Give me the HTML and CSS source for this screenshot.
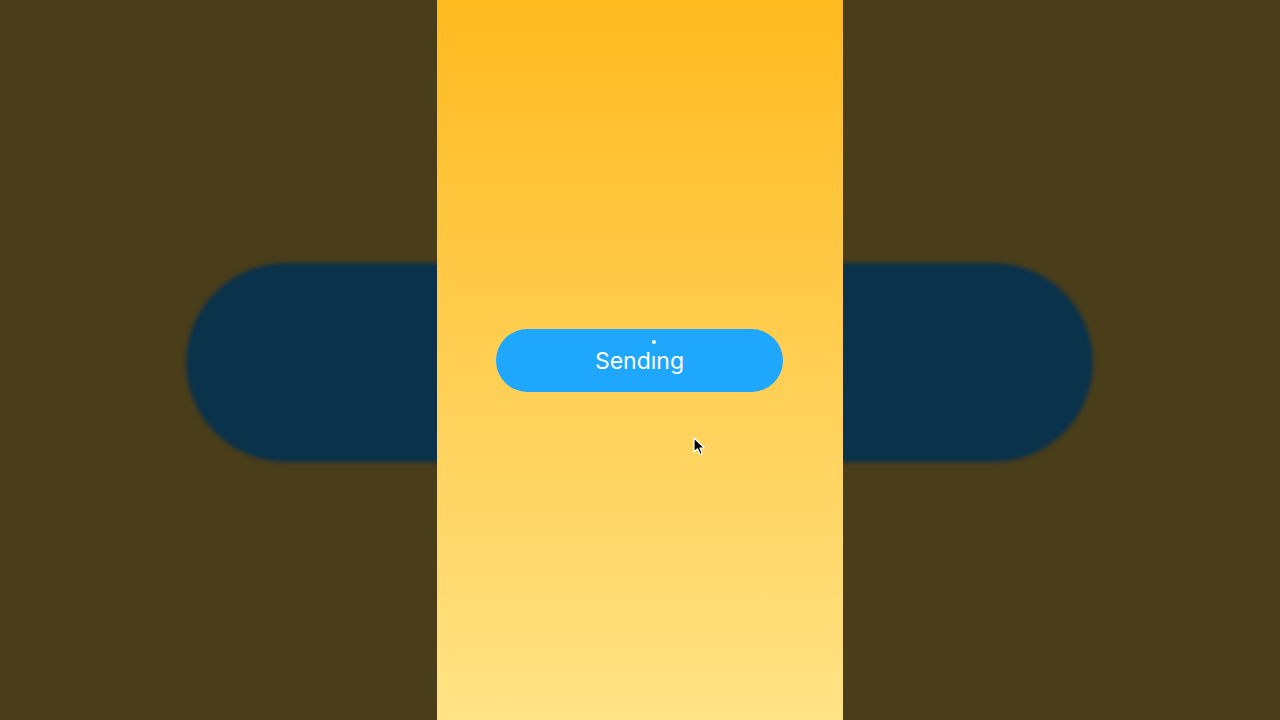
FILE: index.html
```html
<!DOCTYPE html>
<html>
<head>
<meta charset="utf-8">
<link rel="stylesheet" href="styles.css">
</head>
<body>
<div class="stage">
  <div class="backdrop-pill"></div>
  <div class="phone">
    <button class="send-btn"><span class="label">Send<span class="i-wrap">ı<span class="i-dot"></span></span>ng</span></button>
  </div>
  <svg class="cursor" width="14" height="20" viewBox="0 0 14 20">
    <path d="M1 1 L1 15 L4.5 11.8 L7 17.5 L9.3 16.5 L6.9 11 L11.5 11 Z" fill="#000" stroke="#fff" stroke-width="1.2" stroke-linejoin="round"/>
  </svg>
</div>
</body>
</html>
```

FILE: styles.css
```css
html, body {
  margin: 0;
  padding: 0;
}
body {
  width: 1280px;
  height: 720px;
  overflow: hidden;
  background: #4a3d1a;
  font-family: Inter, "Noto Sans", sans-serif;
}
.stage {
  position: relative;
  width: 1280px;
  height: 720px;
  display: flex;
  justify-content: center;
}
.backdrop-pill {
  position: absolute;
  left: 186px;
  top: 263px;
  width: 907px;
  height: 199px;
  border-radius: 100px;
  background: #0a324a;
  filter: blur(2px);
}
.phone {
  position: relative;
  width: 406px;
  height: 720px;
  background: linear-gradient(180deg, #ffba1f 0%, #ffc63e 30%, #ffd25c 60%, #ffe385 100%);
  display: flex;
  flex-direction: column;
  align-items: center;
  padding-top: 329px;
  box-sizing: border-box;
}
.send-btn {
  width: 287px;
  height: 63px;
  margin-left: -1px;
  border: none;
  border-radius: 32px;
  background: #1ea7fd;
  color: #fff;
  font-family: Inter, "Noto Sans", sans-serif;
  font-size: 23px;
  font-weight: 400;
  display: flex;
  align-items: center;
  justify-content: center;
  padding: 0;
}
.label {
  position: relative;
  top: 0px;
  letter-spacing: 0;
}
.i-wrap {
  position: relative;
}
.i-dot {
  position: absolute;
  left: 50%;
  top: -7px;
  width: 4px;
  height: 4px;
  margin-left: -2px;
  border-radius: 50%;
  background: #fff;
}
.cursor {
  position: absolute;
  left: 693px;
  top: 437px;
}
```
